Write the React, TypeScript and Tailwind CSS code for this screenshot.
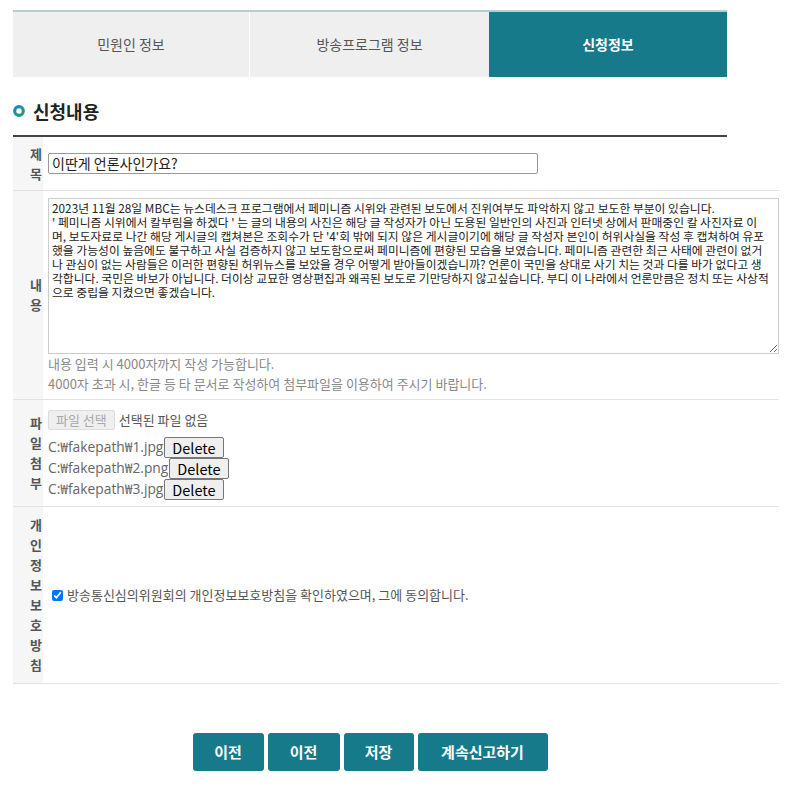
import * as React from "react";

// line breaks follow the reference wrap
const CONTENT = [
  "2023년 11월 28일 MBC는 뉴스데스크 프로그램에서 페미니즘 시위와 관련된 보도에서 진위여부도 파악하지 않고 보도한 부분이 있습니다.",
  "' 페미니즘 시위에서 칼부림을 하겠다 ' 는 글의 내용의 사진은 해당 글 작성자가 아닌 도용된 일반인의 사진과 인터넷 상에서 판매중인 칼 사진자료 이",
  "며, 보도자료로 나간 해당 게시글의 캡쳐본은 조회수가 단 '4'회 밖에 되지 않은 게시글이기에 해당 글 작성자 본인이 허위사실을 작성 후 캡쳐하여 유포",
  "했을 가능성이 높음에도 불구하고 사실 검증하지 않고 보도함으로써 페미니즘에 편향된 모습을 보였습니다. 페미니즘 관련한 최근 사태에 관련이 없거",
  "나 관심이 없는 사람들은 이러한 편향된 허위뉴스를 보았을 경우 어떻게 받아들이겠습니까? 언론이 국민을 상대로 사기 치는 것과 다를 바가 없다고 생",
  "각합니다. 국민은 바보가 아닙니다. 더이상 교묘한 영상편집과 왜곡된 보도로 기만당하지 않고싶습니다. 부디 이 나라에서 언론만큼은 정치 또는 사상적",
  "으로 중립을 지켰으면 좋겠습니다.",
].join("\n");

const files = ["C:₩fakepath₩1.jpg", "C:₩fakepath₩2.png", "C:₩fakepath₩3.jpg"];

function Label({ text }: { text: string }) {
  return (
    <div className="w-[30px] shrink-0 bg-[#f6f6f6] flex flex-col justify-center items-end pr-[1px] py-[8px] text-[13px] leading-[20px] font-semibold text-[#555]">
      {text.split("").map((ch, i) => (
        <span key={i} className="block w-[12px] text-center">
          {ch}
        </span>
      ))}
    </div>
  );
}

export default function App() {
  const [agree, setAgree] = React.useState(true);

  return (
    <div
      className="w-[800px] h-[788px] bg-white pt-[10px] pl-[13px] text-[#333]"
      style={{ fontFamily: '"Noto Sans CJK KR", "Noto Sans", sans-serif' }}
    >
      {/* tabs */}
      <div className="w-[714px] flex border-t-[2px] border-[#b8cdd6]">
        <div className="w-[237px] h-[65px] bg-[#efefef] flex items-center justify-center text-[14px] text-[#555] border-r border-white">
          민원인 정보
        </div>
        <div className="w-[239px] h-[65px] bg-[#efefef] flex items-center justify-center text-[14px] text-[#555]">
          방송프로그램 정보
        </div>
        <div className="flex-1 h-[65px] bg-[#177a8b] flex items-center justify-center text-[14px] font-bold text-white">
          신청정보
        </div>
      </div>

      {/* heading */}
      <div className="w-[714px] mt-[21px] flex items-center gap-[8px] pb-[11px] border-b-[2px] border-[#444]">
        <svg width="12" height="12" viewBox="0 0 12 12">
          <defs>
            <linearGradient id="g" x1="0" y1="0" x2="1" y2="1">
              <stop offset="0" stopColor="#1a86c8" />
              <stop offset="1" stopColor="#2ba06a" />
            </linearGradient>
          </defs>
          <circle cx="6" cy="6" r="4.3" fill="none" stroke="url(#g)" strokeWidth="3.2" />
        </svg>
        <h2 className="text-[18px] leading-[26px] font-bold text-[#222]">신청내용</h2>
      </div>

      {/* table */}
      <div className="w-[766px]">
        <div className="flex h-[54px] border-b border-[#e2e2e2]">
          <Label text="제목" />
          <div className="flex-1 flex items-center pl-[5px]">
            <input
              readOnly
              value="이딴게 언론사인가요?"
              className="w-[490px] h-[21px] border border-[#999] rounded-[2px] px-[3px] text-[14px] text-[#222] outline-none"
            />
          </div>
        </div>

        <div className="flex border-b border-[#e2e2e2]">
          <Label text="내용" />
          <div className="flex-1 pl-[5px] pt-[7px] pb-[5px]">
            <textarea
              readOnly
              wrap="off"
              value={CONTENT}
              className="block w-full h-[156px] border border-[#ccc] px-[3px] py-[2px] text-[11.8px] leading-[14px] text-[#222] outline-none resize-y overflow-hidden"
            />
            <p className="text-[13px] leading-[20px] text-[#888]">내용 입력 시 4000자까지 작성 가능합니다.</p>
            <p className="text-[13px] leading-[20px] text-[#888]">
              4000자 초과 시, 한글 등 타 문서로 작성하여 첨부파일을 이용하여 주시기 바랍니다.
            </p>
          </div>
        </div>

        <div className="flex h-[107px] border-b border-[#e2e2e2]">
          <Label text="파일첨부" />
          <div className="flex-1 pl-[5px] pt-[9px]">
            <div className="flex items-center h-[22px] gap-[4px] text-[13px]">
              <span className="h-[20px] px-[7px] flex items-center bg-[#efefef] border border-[#ddd] rounded-[2px] text-[#aaa]">
                파일 선택
              </span>
              <span className="text-[#555]">선택된 파일 없음</span>
            </div>
            <div className="mt-[6px]">
              {files.map((f) => (
                <div key={f} className="flex items-center h-[21px] text-[13.8px] text-[#666]">
                  <span style={{ fontFamily: '"Open Sans", "Noto Sans CJK KR", sans-serif' }}>{f}</span>
                  <button className="ml-[1px] h-[21px] px-[7px] bg-[#efefef] border border-[#767676] rounded-[2px] text-[14.5px] leading-[18px] text-black">
                    Delete
                  </button>
                </div>
              ))}
            </div>
          </div>
        </div>

        <div className="flex border-b border-[#e2e2e2]">
          <Label text="개인정보보호방침" />
          <div className="flex-1 flex items-center pl-[9px] gap-[4px] text-[13px] text-[#555]">
            <input
              type="checkbox"
              checked={agree}
              onChange={() => setAgree(!agree)}
              className="w-[11px] h-[11px] m-0"
            />
            <span>방송통신심의위원회의 개인정보보호방침을 확인하였으며, 그에 동의합니다.</span>
          </div>
        </div>
      </div>

      {/* buttons */}
      <div className="w-[714px] mt-[49px] flex justify-center gap-[4px]">
        {[
          ["이전", "w-[71px]"],
          ["이전", "w-[72px]"],
          ["저장", "w-[70px]"],
          ["계속신고하기", "w-[130px]"],
        ].map(([t, w], i) => (
          <button
            key={i}
            className={`${w} h-[38px] bg-[#177a8b] rounded-[3px] text-white text-[15px] font-bold`}
          >
            {t}
          </button>
        ))}
      </div>
    </div>
  );
}
